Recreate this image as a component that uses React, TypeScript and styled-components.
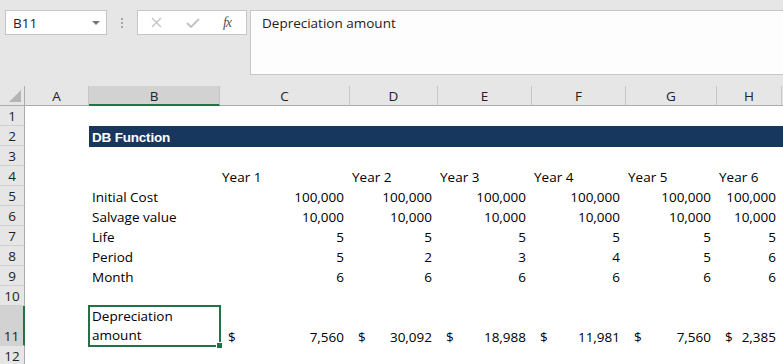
import * as React from 'react';
import styled, { createGlobalStyle } from 'styled-components';

const GREEN = '#217346';
const NAVY = '#17375e';

const GlobalStyle = createGlobalStyle`
    html, body {
        margin: 0;
        padding: 0;
        background: #ffffff;
    }
    body {
        font-family: "Open Sans", "Noto Sans", sans-serif;
        font-size: 13.5px;
        color: #000;
    }
`;

const Page = styled.div`
    width: 783px;
    height: 364px;
    overflow: hidden;
    background: #ffffff;
`;

// ---- formula bar ----

const Toolbar = styled.div`
    display: flex;
    align-items: flex-start;
    height: 86px;
    padding: 10px 0 0 5px;
    box-sizing: border-box;
    background: #e6e6e6;
`;

const NameBox = styled.div`
    display: flex;
    align-items: center;
    justify-content: space-between;
    width: 102px;
    height: 25px;
    box-sizing: border-box;
    padding: 0 6px 0 7px;
    background: #fff;
    border: 1px solid #c6c6c6;
    color: #222;
`;

const Caret = styled.span`
    width: 0;
    height: 0;
    border-left: 4px solid transparent;
    border-right: 4px solid transparent;
    border-top: 4px solid #777;
`;

const Grip = styled.div`
    display: flex;
    flex-direction: column;
    gap: 2px;
    width: 30px;
    align-items: center;
    padding-top: 8px;

    & > span {
        width: 2px;
        height: 2px;
        background: #a6a6a6;
    }
`;

const FxButtons = styled.div`
    display: flex;
    align-items: center;
    width: 110px;
    height: 25px;
    box-sizing: border-box;
    background: #fff;
    border: 1px solid #c6c6c6;
    margin-right: 3px;
`;

const FxIcon = styled.span<{ $w: number }>`
    display: flex;
    justify-content: center;
    width: ${p => p.$w}px;
`;

const FxLabel = styled.span`
    font-family: "Liberation Serif", "DejaVu Serif", serif;
    font-style: italic;
    font-size: 14px;
    color: #555;
    letter-spacing: -1px;
`;

const FormulaInput = styled.div`
    flex: 1;
    height: 65px;
    box-sizing: border-box;
    padding: 3px 11px;
    background: #fdfdfd;
    border: 1px solid #c6c6c6;
    border-right: none;
    color: #222;
`;

// ---- sheet ----

const Sheet = styled.div`
    display: grid;
    grid-template-columns: 25px 64px 131px 130px 88px 94px 94px 91px 65px 1fr;
    grid-template-rows: 20px repeat(10, 20px) 40px 20px;
`;

const Corner = styled.div`
    background: #e6e6e6;
    border-right: 1px solid #ababab;
    border-bottom: 1px solid #ababab;
    display: flex;
    align-items: flex-end;
    justify-content: flex-end;
    padding: 0 3px 3px 0;
`;

const ColHead = styled.div<{ $selected?: boolean }>`
    display: flex;
    align-items: center;
    justify-content: center;
    background: ${p => (p.$selected ? '#d2d2d2' : '#e6e6e6')};
    border-right: 1px solid #c6c6c6;
    border-bottom: ${p => (p.$selected ? `2px solid ${GREEN}` : '1px solid #ababab')};
    color: #222;
    padding-top: 1px;
`;

const RowHead = styled.div<{ $selected?: boolean }>`
    display: flex;
    align-items: flex-end;
    justify-content: center;
    line-height: 18px;
    background: ${p => (p.$selected ? '#d2d2d2' : '#e6e6e6')};
    border-right: ${p => (p.$selected ? `2px solid ${GREEN}` : '1px solid #ababab')};
    border-bottom: 1px solid #d0d0d0;
    color: #222;
`;

const Cell = styled.div<{ $align?: 'left' | 'right' }>`
    display: flex;
    align-items: flex-end;
    justify-content: ${p => (p.$align === 'right' ? 'flex-end' : 'flex-start')};
    padding: 0 6px 0 3px;
    line-height: 18px;
    white-space: nowrap;
`;

const YearCell = styled(Cell)`
    padding-left: 2px;
`;

const MoneyCell = styled(Cell)`
    justify-content: space-between;
    padding-left: 8px;
    line-height: 17px;
`;

const Banner = styled.div`
    grid-column: span 8;
    display: flex;
    align-items: center;
    padding: 1px 0 0 3px;
    background: ${NAVY};
    color: #fff;
    font-family: "Liberation Sans", Arial, sans-serif;
    font-weight: bold;
    font-size: 13.5px;
    letter-spacing: -0.2px;
    margin-bottom: -1px;
`;

const ActiveCell = styled.div`
    position: relative;
    display: flex;
    align-items: flex-end;
    margin: -1px;
    padding: 0 3px 0 2px;
    border: 2px solid ${GREEN};
    line-height: 19px;

    & > i {
        position: absolute;
        right: -4px;
        bottom: -4px;
        width: 5px;
        height: 5px;
        background: ${GREEN};
        border: 1px solid #fff;
    }
`;

const columns = ['A', 'B', 'C', 'D', 'E', 'F', 'G', 'H'];

const dataRows: { label: string; values: string[] }[] = [
    { label: 'Initial Cost', values: ['100,000', '100,000', '100,000', '100,000', '100,000', '100,000'] },
    { label: 'Salvage value', values: ['10,000', '10,000', '10,000', '10,000', '10,000', '10,000'] },
    { label: 'Life', values: ['5', '5', '5', '5', '5', '5'] },
    { label: 'Period', values: ['5', '2', '3', '4', '5', '6'] },
    { label: 'Month', values: ['6', '6', '6', '6', '6', '6'] },
];

const depreciation = ['7,560', '30,092', '18,988', '11,981', '7,560', '2,385'];

const emptyCells = (n: number, key: string) =>
    Array.from({ length: n }, (_, i) => <Cell key={`${key}-${i}`} />);

const App = () => {
    return (
        <Page>
            <GlobalStyle />
            <Toolbar>
                <NameBox>
                    <span>B11</span>
                    <Caret />
                </NameBox>
                <Grip>
                    <span />
                    <span />
                    <span />
                </Grip>
                <FxButtons>
                    <FxIcon $w={36}>
                        <svg width="11" height="11" viewBox="0 0 11 11">
                            <path d="M1 1 L10 10 M10 1 L1 10" stroke="#c4c4c4" strokeWidth="1.4" />
                        </svg>
                    </FxIcon>
                    <FxIcon $w={38}>
                        <svg width="14" height="10" viewBox="0 0 14 10">
                            <path d="M1 5 L5 9 L13 1" stroke="#c4c4c4" strokeWidth="2" fill="none" />
                        </svg>
                    </FxIcon>
                    <FxIcon $w={30}>
                        <FxLabel>fx</FxLabel>
                    </FxIcon>
                </FxButtons>
                <FormulaInput>Depreciation amount</FormulaInput>
            </Toolbar>

            <Sheet>
                <Corner>
                    <svg width="12" height="12" viewBox="0 0 12 12">
                        <polygon points="12,0 12,12 0,12" fill="#b4b4b4" />
                    </svg>
                </Corner>
                {columns.map(c => (
                    <ColHead key={c} $selected={c === 'B'}>{c}</ColHead>
                ))}
                <ColHead />

                {/* row 1 */}
                <RowHead>1</RowHead>
                {emptyCells(9, 'r1')}

                {/* row 2 */}
                <RowHead>2</RowHead>
                <Cell />
                <Banner>DB Function</Banner>

                {/* row 3 */}
                <RowHead>3</RowHead>
                {emptyCells(9, 'r3')}

                {/* row 4 */}
                <RowHead>4</RowHead>
                <Cell />
                <Cell />
                {[1, 2, 3, 4, 5, 6].map(y => (
                    <YearCell key={y}>Year {y}</YearCell>
                ))}
                <Cell />

                {dataRows.map((row, i) => (
                    <React.Fragment key={row.label}>
                        <RowHead>{i + 5}</RowHead>
                        <Cell />
                        <Cell>{row.label}</Cell>
                        {row.values.map((v, j) => (
                            <Cell key={j} $align="right">{v}</Cell>
                        ))}
                        <Cell />
                    </React.Fragment>
                ))}

                {/* row 10 */}
                <RowHead>10</RowHead>
                {emptyCells(9, 'r10')}

                {/* row 11 */}
                <RowHead $selected>11</RowHead>
                <Cell />
                <ActiveCell>
                    <span>Depreciation<br />amount</span>
                    <i />
                </ActiveCell>
                {depreciation.map((v, j) => (
                    <MoneyCell key={j}>
                        <span>$</span>
                        <span>{v}</span>
                    </MoneyCell>
                ))}
                <Cell />

                {/* row 12 */}
                <RowHead>12</RowHead>
                {emptyCells(9, 'r12')}
            </Sheet>
        </Page>
    );
};

export default App;
